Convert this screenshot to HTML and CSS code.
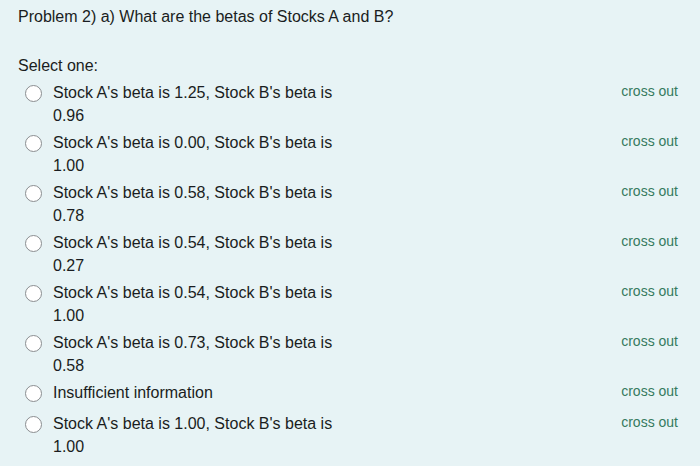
FILE: index.html
```html
<!DOCTYPE html>
<html>
<head>
<meta charset="utf-8">
<link rel="stylesheet" href="styles.css">
</head>
<body>
<div class="page">
  <div class="question">Problem 2) a) What are the betas of Stocks A and B?</div>
  <div class="prompt">Select one:</div>
  <div class="answers">
    <div class="option"><span class="radio"></span><span class="label">Stock A's beta is 1.25, Stock B's beta is 0.96</span><a class="cross">cross out</a></div>
    <div class="option"><span class="radio"></span><span class="label">Stock A's beta is 0.00, Stock B's beta is 1.00</span><a class="cross">cross out</a></div>
    <div class="option"><span class="radio"></span><span class="label">Stock A's beta is 0.58, Stock B's beta is 0.78</span><a class="cross">cross out</a></div>
    <div class="option"><span class="radio"></span><span class="label">Stock A's beta is 0.54, Stock B's beta is 0.27</span><a class="cross">cross out</a></div>
    <div class="option"><span class="radio"></span><span class="label">Stock A's beta is 0.54, Stock B's beta is 1.00</span><a class="cross">cross out</a></div>
    <div class="option"><span class="radio"></span><span class="label">Stock A's beta is 0.73, Stock B's beta is 0.58</span><a class="cross">cross out</a></div>
    <div class="option single"><span class="radio"></span><span class="label">Insufficient information</span><a class="cross">cross out</a></div>
    <div class="option"><span class="radio"></span><span class="label">Stock A's beta is 1.00, Stock B's beta is 1.00</span><a class="cross">cross out</a></div>
  </div>
</div>
</body>
</html>
```
FILE: styles.css
```css
html, body {
  margin: 0;
  padding: 0;
  background: #e7f3f5;
}
.page {
  width: 700px;
  height: 466px;
  box-sizing: border-box;
  padding: 6px 22px 0 18px;
  font-family: "Liberation Sans", Arial, sans-serif;
  font-size: 16px;
  color: #1a1d21;
  overflow: hidden;
}
.question {
  line-height: 22px;
}
.prompt {
  line-height: 22px;
  margin-top: 27px;
}
.answers {
  margin-top: 2px;
  padding-left: 7px;
}
.option {
  display: flex;
  align-items: flex-start;
  padding: 2px 0;
  min-height: 27px;
}
.radio {
  flex: none;
  width: 17px;
  height: 17px;
  box-sizing: border-box;
  border: 1.5px solid #8a8d90;
  border-radius: 50%;
  background: #fff;
  margin-top: 4px;
  margin-right: 11px;
}
.label {
  width: 290px;
  line-height: 23px;
}
.cross {
  margin-left: auto;
  font-size: 14px;
  line-height: 20px;
  color: #357a5e;
}
```
